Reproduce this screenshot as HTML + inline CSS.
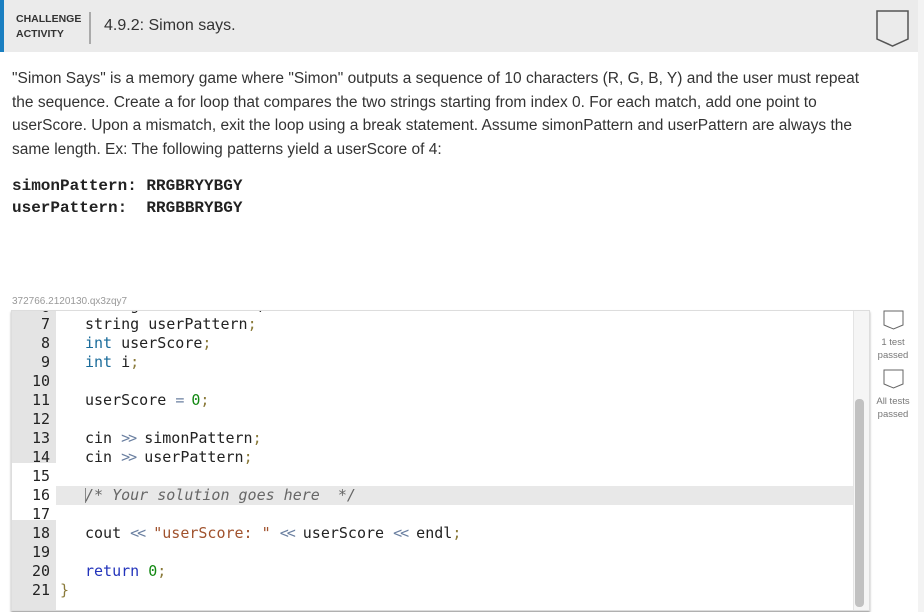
<!DOCTYPE html>
<html><head><style>
body{margin:0;width:924px;height:612px;background:#fff;position:relative;overflow:hidden;font-family:"Liberation Sans",sans-serif;}
.hdr{position:absolute;left:0;top:0;width:918px;height:52px;background:#ebebeb;}
.bar{position:absolute;left:0;top:0;width:4px;height:52px;background:#1a7fc1;}
.ca{position:absolute;left:16px;top:12px;font-size:10.5px;font-weight:bold;color:#333;line-height:15px;}
.sep{position:absolute;left:89px;top:12px;width:2px;height:32px;background:#aaa;}
.ttl{position:absolute;left:104px;top:17px;font-size:16px;color:#333;}
.p{position:absolute;left:12px;top:67px;width:860px;font-size:15.5px;line-height:23.5px;color:#333;}
.pre{position:absolute;left:12px;font-family:"Liberation Mono",monospace;font-size:16px;color:#222;font-weight:bold;white-space:pre;}
.id{position:absolute;left:12px;top:296px;font-size:10px;color:#999;}
.ed{position:absolute;left:11px;top:310px;width:857px;height:299px;border:1px solid #ddd;box-shadow:0 2px 2px #aaa;overflow:hidden;}
.ln{position:absolute;left:0;width:44px;height:19px;text-align:right;font-family:"DejaVu Sans Mono",monospace;font-size:15px;line-height:19px;color:#222;box-sizing:border-box;padding-right:6px;}
.code{position:absolute;left:73px;font-family:"DejaVu Sans Mono",monospace;font-size:15px;line-height:19px;color:#222;white-space:pre;font-variant-ligatures:none;}
.k{color:#1a6b9a}.n{color:#118811}.s{color:#a0522d}.pu{color:#8a7a3a}.o{color:#6a7fa0;letter-spacing:-2px}.c{color:#666;font-style:italic}.r{color:#2233bb}
.sb{position:absolute;left:843px;top:88px;width:9px;height:208px;background:#c1c1c1;border-radius:4px;}
.ic{position:absolute;width:22px;height:20px;}
.lbl{position:absolute;left:868px;width:50px;text-align:center;font-size:9.5px;color:#777;line-height:13px;}
</style></head><body>
<div class="hdr"><div class="bar"></div>
<div class="ca">CHALLENGE<br>ACTIVITY</div><div class="sep"></div>
<div class="ttl">4.9.2: Simon says.</div>
<svg style="position:absolute;left:876px;top:10px" width="34" height="38"><path d="M1 1H32V29L16.5 36L1 29Z" fill="none" stroke="#555" stroke-width="1.5"/></svg>
</div>
<div class="p">"Simon Says" is a memory game where "Simon" outputs a sequence of 10 characters (R, G, B, Y) and the user must repeat the sequence. Create a for loop that compares the two strings starting from index 0. For each match, add one point to userScore. Upon a mismatch, exit the loop using a break statement. Assume simonPattern and userPattern are always the same length. Ex: The following patterns yield a userScore of 4:</div>
<div class="pre" style="top:177px">simonPattern: RRGBRYYBGY</div>
<div class="pre" style="top:199px">userPattern:  RRGBBRYBGY</div>
<div class="id">372766.2120130.qx3zqy7</div>
<div class="ed">
<div style="position:absolute;left:0;top:0;width:44px;height:299px;background:#e4e4e4"></div>
<div style="position:absolute;left:0;top:152px;width:44px;height:57px;background:#fff"></div>
<div style="position:absolute;left:44px;top:175px;width:797px;height:19px;background:#e8e8e8"></div>
<div style="position:absolute;left:73px;top:177px;width:1px;height:15px;background:#888"></div>
<div class="ln" style="top:-13px">6</div>
<div class="ln" style="top:4px">7</div><div class="ln" style="top:23px">8</div><div class="ln" style="top:42px">9</div><div class="ln" style="top:61px">10</div><div class="ln" style="top:80px">11</div><div class="ln" style="top:99px">12</div><div class="ln" style="top:118px">13</div><div class="ln" style="top:137px">14</div><div class="ln" style="top:156px">15</div><div class="ln" style="top:175px">16</div><div class="ln" style="top:194px">17</div><div class="ln" style="top:213px">18</div><div class="ln" style="top:232px">19</div><div class="ln" style="top:251px">20</div><div class="ln" style="top:270px">21</div>
<div class="code" style="top:-15px">string simonPattern;
string userPattern<span class="pu">;</span>
<span class="k">int</span> userScore<span class="pu">;</span>
<span class="k">int</span> i<span class="pu">;</span>

userScore <span class="o">=</span> <span class="n">0</span><span class="pu">;</span>

cin <span class="o">&gt;&gt;</span> simonPattern<span class="pu">;</span>
cin <span class="o">&gt;&gt;</span> userPattern<span class="pu">;</span>

<span class="c">/* Your solution goes here  */</span>

cout <span class="o">&lt;&lt;</span> <span class="s">"userScore: "</span> <span class="o">&lt;&lt;</span> userScore <span class="o">&lt;&lt;</span> endl<span class="pu">;</span>

<span class="r">return</span> <span class="n">0</span><span class="pu">;</span></div>
<div class="code" style="top:270px;left:48px"><span class="pu">}</span></div>
<div style="position:absolute;left:841px;top:0;width:16px;height:299px;background:#f5f5f5;border-left:1px solid #e4e4e4"></div>
<div class="sb"></div>
</div>
<svg class="ic" style="left:883px;top:310px" width="22" height="20"><path d="M1 1H20V15L10.5 19L1 15Z" fill="none" stroke="#666" stroke-width="1"/></svg>
<div class="lbl" style="top:336px">1 test<br>passed</div>
<svg class="ic" style="left:883px;top:369px" width="22" height="20"><path d="M1 1H20V15L10.5 19L1 15Z" fill="none" stroke="#666" stroke-width="1"/></svg>
<div class="lbl" style="top:395px">All tests<br>passed</div>
<div style="position:absolute;left:918px;top:0;width:6px;height:612px;background:#f3f3f3"></div>
</body></html>
